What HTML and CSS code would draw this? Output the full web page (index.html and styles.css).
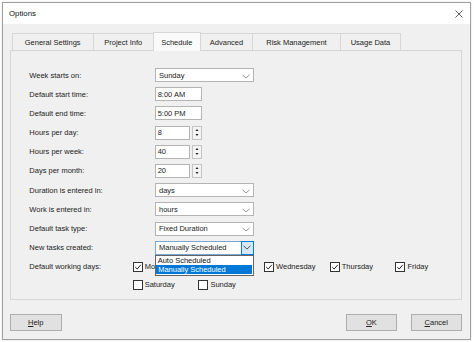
FILE: index.html
```html
<!DOCTYPE html>
<html lang="en">
  <head>
    <meta charset="UTF-8" />
    <title>Options</title>
    <link rel="stylesheet" href="styles.css">
  </head>
  <body>
    <div class="window">
      <div class="titlebar">
        <span>Options</span>
        <svg class="close" width="8" height="8" viewBox="0 0 8 8"><path d="M0.5 0.5L7.5 7.5M7.5 0.5L0.5 7.5" stroke="#333" stroke-width="0.8" fill="none"/></svg>
      </div>
      <div class="content">
        <div class="tabs">
          <div class="tab t-general">General Settings</div>
          <div class="tab t-project">Project Info</div>
          <div class="tab t-schedule active">Schedule</div>
          <div class="tab t-advanced">Advanced</div>
          <div class="tab t-risk">Risk Management</div>
          <div class="tab t-usage">Usage Data</div>
        </div>
        <div class="panel">
          <div class="form">
            <span>Week starts on:</span>
            <div class="combo">Sunday<svg class="chev" width="8" height="5" viewBox="0 0 8 5"><path d="M0.5 0.8L4 4L7.5 0.8" stroke="#8a8a8a" stroke-width="0.9" fill="none"/></svg></div>

            <span>Default start time:</span>
            <div class="textbox">8:00 AM</div>

            <span>Default end time:</span>
            <div class="textbox">5:00 PM</div>

            <span>Hours per day:</span>
            <div class="spin"><div class="spin-text">8</div><div class="spin-btn"><svg width="4" height="9" viewBox="0 0 4 9"><path d="M2 1L3.5 3H0.5Z M0.5 6H3.5L2 8Z" fill="#222"/></svg></div></div>

            <span>Hours per week:</span>
            <div class="spin"><div class="spin-text">40</div><div class="spin-btn"><svg width="4" height="9" viewBox="0 0 4 9"><path d="M2 1L3.5 3H0.5Z M0.5 6H3.5L2 8Z" fill="#222"/></svg></div></div>

            <span>Days per month:</span>
            <div class="spin"><div class="spin-text">20</div><div class="spin-btn"><svg width="4" height="9" viewBox="0 0 4 9"><path d="M2 1L3.5 3H0.5Z M0.5 6H3.5L2 8Z" fill="#222"/></svg></div></div>

            <span>Duration is entered in:</span>
            <div class="combo">days<svg class="chev" width="8" height="5" viewBox="0 0 8 5"><path d="M0.5 0.8L4 4L7.5 0.8" stroke="#8a8a8a" stroke-width="0.9" fill="none"/></svg></div>

            <span>Work is entered in:</span>
            <div class="combo">hours<svg class="chev" width="8" height="5" viewBox="0 0 8 5"><path d="M0.5 0.8L4 4L7.5 0.8" stroke="#8a8a8a" stroke-width="0.9" fill="none"/></svg></div>

            <span>Default task type:</span>
            <div class="combo">Fixed Duration<svg class="chev" width="8" height="5" viewBox="0 0 8 5"><path d="M0.5 0.8L4 4L7.5 0.8" stroke="#8a8a8a" stroke-width="0.9" fill="none"/></svg></div>

            <span>New tasks created:</span>
            <div class="combo open">
              Manually Scheduled
              <div class="drop-btn"><svg width="8" height="5" viewBox="0 0 8 5"><path d="M0.5 0.8L4 4L7.5 0.8" stroke="#444" stroke-width="0.9" fill="none"/></svg></div>
              <div class="list">
                <div class="item">Auto Scheduled</div>
                <div class="item selected">Manually Scheduled</div>
              </div>
            </div>
          </div>

          <div class="days">
            <span class="days-label">Default working days:</span>
            <div class="check mon"><span class="box checked"><svg width="8" height="8" viewBox="0 0 8 8"><path d="M1.3 4.2L3.2 6L6.8 1.8" stroke="#222" stroke-width="1" fill="none"/></svg></span><span class="clip">Monday</span></div>
            <div class="check"></div>
            <div class="check"><span class="box checked"><svg width="8" height="8" viewBox="0 0 8 8"><path d="M1.3 4.2L3.2 6L6.8 1.8" stroke="#222" stroke-width="1" fill="none"/></svg></span>Wednesday</div>
            <div class="check"><span class="box checked"><svg width="8" height="8" viewBox="0 0 8 8"><path d="M1.3 4.2L3.2 6L6.8 1.8" stroke="#222" stroke-width="1" fill="none"/></svg></span>Thursday</div>
            <div class="check"><span class="box checked"><svg width="8" height="8" viewBox="0 0 8 8"><path d="M1.3 4.2L3.2 6L6.8 1.8" stroke="#222" stroke-width="1" fill="none"/></svg></span>Friday</div>
            <div class="check sat"><span class="box"></span>Saturday</div>
            <div class="check"><span class="box"></span>Sunday</div>
          </div>
        </div>
        <div class="buttons">
          <button class="btn"><u>H</u>elp</button>
          <div class="spacer"></div>
          <button class="btn"><u>O</u>K</button>
          <button class="btn"><u>C</u>ancel</button>
        </div>
      </div>
    </div>
  </body>
</html>
```

FILE: styles.css
```css
*{
    margin: 0;
    padding: 0;
    box-sizing: border-box;
}
body{
    background: #fff;
    font-family: "Liberation Sans", Arial, sans-serif;
    font-size: 7.5px;
    color: #222;
}
.window{
    margin: 2px;
    width: 469px;
    height: 338px;
    border: 1px solid #a0a0a0;
    background: #f0f0f0;
    display: flex;
    flex-direction: column;
    box-shadow: 0 0 2px rgba(0,0,0,0.15);
}
.titlebar{
    height: 21px;
    background: #fff;
    display: flex;
    align-items: center;
    justify-content: space-between;
    padding: 0 7.5px 0 6px;
    font-size: 7.8px;
    color: #111;
}
.content{
    flex: 1;
    display: flex;
    flex-direction: column;
    padding: 9px 8px 8px 7px;
}
.tabs{
    display: flex;
    align-items: flex-end;
    height: 17px;
    padding-left: 1.7px;
}
.tab{
    height: 17px;
    border: 1px solid #d6d6d6;
    border-bottom: none;
    margin-right: -1px;
    display: flex;
    align-items: center;
    justify-content: center;
    background: #f0f0f0;
    color: #222;
}
.tab.active{
    height: 19px;
    margin-bottom: -1px;
    background: #fafafa;
    position: relative;
    z-index: 1;
}
.t-general{ width: 82px; }
.t-project{ width: 61px; }
.t-schedule{ width: 48.3px; }
.t-advanced{ width: 53px; }
.t-risk{ width: 89px; }
.t-usage{ width: 61px; }

.panel{
    height: 250px;
    border: 1px solid #d6d6d6;
    background: #f0f0f0;
    padding: 17px 0 0 18.3px;
}
.form{
    display: grid;
    grid-template-columns: 125.7px auto;
    grid-auto-rows: 14px;
    row-gap: 5.2px;
    align-items: center;
    justify-items: start;
}
.combo{
    width: 99px;
    height: 14px;
    border: 1px solid #b4b4b4;
    background: #fff;
    display: flex;
    align-items: center;
    padding-left: 3px;
    position: relative;
}
.chev{
    position: absolute;
    right: 3px;
    top: 4.5px;
}
.textbox{
    width: 47px;
    height: 14px;
    border: 1px solid #b4b4b4;
    background: #fff;
    display: flex;
    align-items: center;
    padding-left: 1.7px;
}
.spin{
    display: flex;
    gap: 1.5px;
    height: 14px;
}
.spin-text{
    width: 35.5px;
    border: 1px solid #b4b4b4;
    background: #fff;
    display: flex;
    align-items: center;
    padding-left: 1.7px;
}
.spin-btn{
    width: 10.5px;
    border: 1px solid #c4c4c4;
    background: #f4f4f4;
    display: flex;
    align-items: center;
    justify-content: center;
}
.combo.open{
    border-color: #7aa7d0;
}
.drop-btn{
    position: absolute;
    right: -1px;
    top: -1px;
    width: 13px;
    height: 14px;
    border: 1px solid #0078d7;
    background: #d5e8f8;
    display: flex;
    align-items: center;
    justify-content: center;
}
.list{
    position: absolute;
    left: -1px;
    top: 13px;
    width: 99px;
    border: 1px solid #646464;
    background: #fff;
    padding: 0.5px 0;
    z-index: 2;
}
.item{
    height: 9px;
    line-height: 9px;
    padding-left: 1.7px;
    color: #111;
}
.item.selected{
    background: #0078d7;
    color: #fff;
    margin: 0 0.5px;
}

.days{
    display: grid;
    grid-template-columns: 103.4px repeat(5, 65.7px);
    grid-auto-rows: 10px;
    row-gap: 8.3px;
    align-items: center;
    margin-top: 7px;
}
.check{
    display: flex;
    align-items: center;
    gap: 2px;
}
.check.sat{
    grid-column: 2;
}
.check.mon{
    width: 22px;
    overflow: hidden;
    white-space: nowrap;
}
.clip{
    overflow: hidden;
}
.box{
    flex: none;
    width: 10px;
    height: 10px;
    border: 1px solid #333;
    background: #fff;
    display: flex;
    align-items: center;
    justify-content: center;
}

.buttons{
    display: flex;
    gap: 13.3px;
    margin-top: 14px;
}
.spacer{
    flex: 1;
}
.btn{
    width: 51.5px;
    height: 16.5px;
    border: 1px solid #adadad;
    background: #e1e1e1;
    font-family: "Liberation Sans", Arial, sans-serif;
    font-size: 7.5px;
    color: #222;
}
```
